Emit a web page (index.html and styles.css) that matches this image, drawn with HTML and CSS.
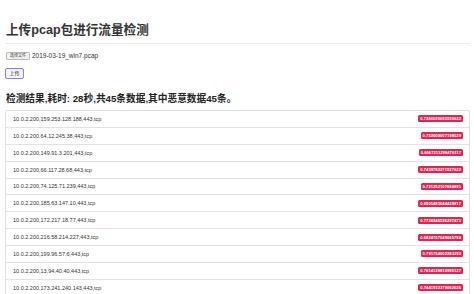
FILE: index.html
```html
<!DOCTYPE html>
<html lang="zh">
<head>
<meta charset="utf-8">
<title>上传pcap包进行流量检测</title>
<link rel="stylesheet" href="styles.css">
</head>
<body>
<div class="container">
  <h1 class="title">上传pcap包进行流量检测</h1>
  <hr class="rule">
  <form class="upload">
    <div class="file-row">
      <span class="file-btn">选择文件</span>
      <span class="file-name">2019-03-19_win7.pcap</span>
    </div>
    <div class="submit-row">
      <button type="button" class="submit">上传</button>
    </div>
  </form>
  <h3 class="result">检测结果,耗时: 28秒,共45条数据,其中恶意数据45条。</h3>
  <ul class="list">
    <li class="item"><span>10.0.2.200,159.253.128.188,443,tcp</span><span class="badge">0.7366020655550632</span></li>
    <li class="item"><span>10.0.2.200,64.12.245.38,443,tcp</span><span class="badge">0.752009007198529</span></li>
    <li class="item"><span>10.0.2.200,149.91.3.201,443,tcp</span><span class="badge">0.6667211298470117</span></li>
    <li class="item"><span>10.0.2.200,66.117.28.68,443,tcp</span><span class="badge">0.7439782271527822</span></li>
    <li class="item"><span>10.0.2.200,74.125.71.239,443,tcp</span><span class="badge">0.721252107684891</span></li>
    <li class="item"><span>10.0.2.200,185.63.147.10,443,tcp</span><span class="badge">0.6505483044429817</span></li>
    <li class="item"><span>10.0.2.200,172.217.18.77,443,tcp</span><span class="badge">0.7736946536297473</span></li>
    <li class="item"><span>10.0.2.200,216.58.214.227,443,tcp</span><span class="badge">0.6824707049665784</span></li>
    <li class="item"><span>10.0.2.200,199.96.57.6,443,tcp</span><span class="badge">0.791754002283293</span></li>
    <li class="item"><span>10.0.2.200,13.94.40.40,443,tcp</span><span class="badge">0.7014128810995127</span></li>
    <li class="item"><span>10.0.2.200,173.241.240.143,443,tcp</span><span class="badge">0.7441932379062636</span></li>
  </ul>
</div>
</body>
</html>
```

FILE: styles.css
```css
html, body {
  margin: 0;
  padding: 0;
  background: #fff;
  overflow: hidden;
}
body {
  font-family: "Liberation Sans", "Noto Sans CJK SC", sans-serif;
  color: #212529;
}
.container {
  padding: 0 4px 0 5px;
}
.title {
  margin: 0;
  padding: 21px 0 0 1px;
  font-size: 12.6px;
  line-height: 18px;
  font-weight: 600;
  color: #333;
}
.rule {
  margin: 4px 0 0;
  border: 0;
  border-top: 1px solid #eee;
}
.upload {
  margin: 8px 0 0;
}
.file-row {
  display: flex;
  align-items: center;
  gap: 2px;
  height: 8px;
  padding-left: 1px;
}
.file-btn {
  font-size: 4px;
  line-height: 6px;
  padding: 0 3px;
  border: 1px solid #b8b8b8;
  border-radius: 1px;
  background: #f2f2f2;
  color: #333;
}
.file-name {
  font-size: 6.5px;
  line-height: 8px;
  color: #333;
}
.submit-row {
  margin-top: 8px;
  display: flex;
}
.submit {
  font-family: inherit;
  font-size: 5px;
  line-height: 7px;
  height: 11px;
  width: 19px;
  padding: 0;
  border: 1.5px solid #8c7fe6;
  border-radius: 2px;
  background: #f4f4f4;
  color: #222;
}
.result {
  margin: 14px 0 0;
  padding-left: 1px;
  font-size: 9.7px;
  line-height: 12px;
  font-weight: bold;
  color: #222;
}
.list {
  list-style: none;
  margin: 5px 0 0;
  padding: 0;
}
.item {
  display: flex;
  justify-content: space-between;
  align-items: center;
  padding: 3.95px 6px 3.95px 7px;
  font-size: 5.5px;
  line-height: 8px;
  border: 1px solid #e2e2e2;
  margin-top: -1px;
  color: #333;
}
.item:first-child {
  margin-top: 0;
  border-top-left-radius: 2px;
  border-top-right-radius: 2px;
}
.badge {
  background: #dc2654;
  color: #fff;
  font-size: 4.2px;
  line-height: 5px;
  font-weight: bold;
  padding: 1px 2px;
  border-radius: 1.5px;
}
```
